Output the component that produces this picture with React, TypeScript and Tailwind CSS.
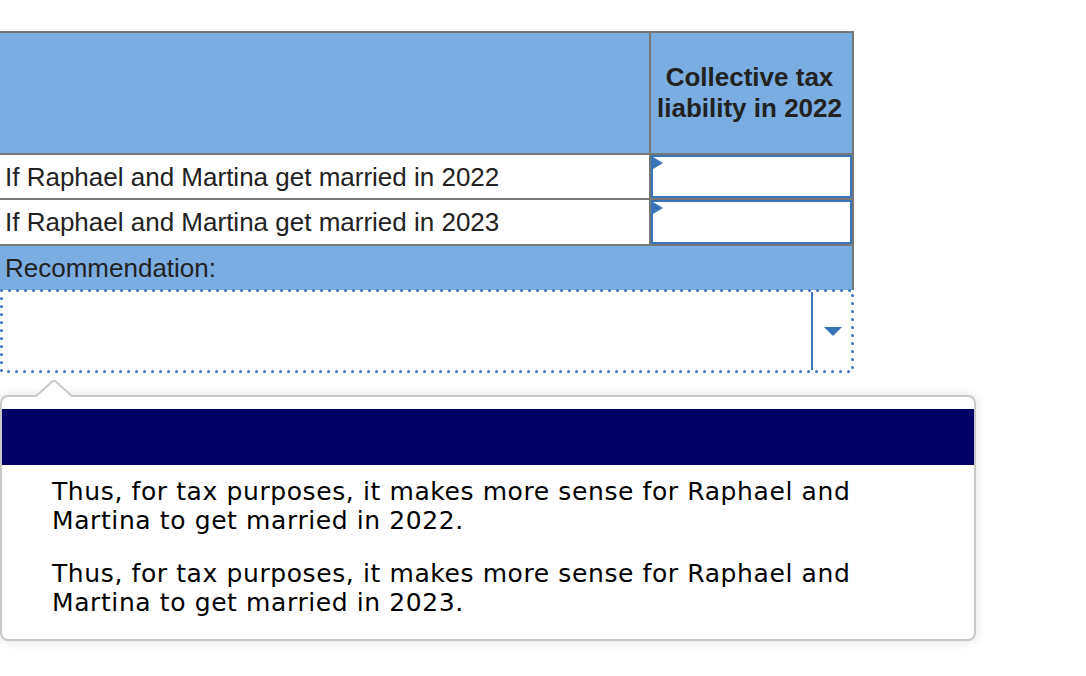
import React from "react";

const rows = [
  "If Raphael and Martina get married in 2022",
  "If Raphael and Martina get married in 2023",
];

const options = [
  "Thus, for tax purposes, it makes more sense for Raphael and Martina to get married in 2022.",
  "Thus, for tax purposes, it makes more sense for Raphael and Martina to get married in 2023.",
];

const InputCell = () => (
  <div className="relative h-full border-2 border-[#3a74b8] bg-white">
    <svg className="absolute left-0 top-0" width="11" height="12" viewBox="0 0 11 12">
      <polygon points="0,0 10,6 0,12" fill="#3a74b8" />
    </svg>
  </div>
);

const App = () => {
  return (
    <div className="min-h-screen w-full bg-white pt-[31px] font-['Liberation_Sans',Arial,sans-serif] text-[#222]">
      {/* TABLE */}
      <div className="w-[854px] border-t-2 border-r-2 border-[#777]">
        <div className="flex h-[122px] border-b-2 border-[#777] bg-[#7aade2]">
          <div className="w-[651px] border-r-2 border-[#777]"></div>
          <div className="flex flex-1 items-center justify-center pr-[4px] text-center text-[26px] font-bold leading-[31px]">
            Collective tax
            <br />
            liability in 2022
          </div>
        </div>

        {rows.map((label, i) => (
          <div
            key={label}
            className={`flex border-b-2 border-[#777] ${i === 0 ? "h-[45px]" : "h-[46px]"}`}
          >
            <div className="flex w-[651px] items-center border-r-2 border-[#777] pl-[5px] text-[26px] leading-none">
              {label}
            </div>
            <div className="flex-1">
              <InputCell />
            </div>
          </div>
        ))}

        <div className="flex h-[44px] items-center bg-[#7aade2] pl-[5px] text-[26px] leading-none">
          Recommendation:
        </div>
      </div>

      {/* DROPDOWN */}
      <div className="relative mt-[-1px] flex h-[84px] w-[854px] p-[3px]">
        <svg className="absolute left-0 top-0" width="854" height="84" viewBox="0 0 854 84">
          <rect
            x="1.5"
            y="1.5"
            width="851"
            height="81"
            fill="none"
            stroke="#3a74b8"
            strokeWidth="3"
            strokeDasharray="0 8"
            strokeLinecap="round"
          />
        </svg>
        <div className="flex-1"></div>
        <div className="mr-[-1px] flex w-[41px] items-center justify-center border-l-2 border-[#3a74b8]">
          <svg width="18" height="9" viewBox="0 0 18 9" className="mt-[1px]">
            <polygon points="0,0 18,0 9,9" fill="#3a74b8" />
          </svg>
        </div>
      </div>

      {/* POPUP */}
      <div className="relative mt-[22px] w-[976px] rounded-lg border-2 border-[#c8c8c8] bg-white pt-[12px] pb-[22px] shadow-[0_0_12px_rgba(0,0,0,0.12)]">
        <svg
          className="absolute left-[34px] top-[-17px]"
          width="36"
          height="18"
          viewBox="0 0 36 18"
        >
          <polygon points="0,17 18,1 36,17" fill="white" />
          <polyline points="0,16 18,0 36,16" fill="none" stroke="#c8c8c8" strokeWidth="2" />
        </svg>
        <div className="h-[56px] w-full bg-[#000066]"></div>
        <div className="flex w-[880px] flex-col gap-[24px] pt-[12px] pl-[50px] font-['DejaVu_Sans',Verdana,sans-serif] text-[25px] leading-[29px] tracking-[0.6px] text-black">
          {options.map((o) => (
            <p key={o}>{o}</p>
          ))}
        </div>
      </div>
    </div>
  );
};

export default App;
